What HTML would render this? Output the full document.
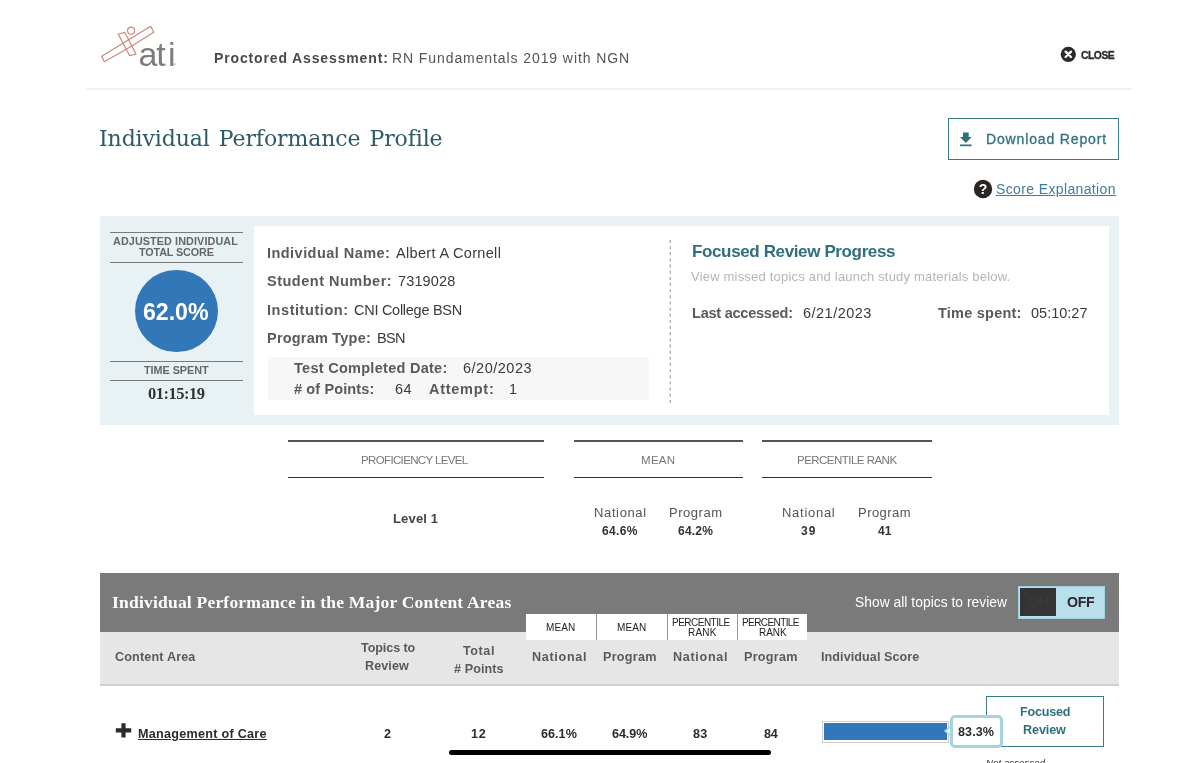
<!DOCTYPE html>
<html lang="en">
<head>
<meta charset="utf-8">
<title>Individual Performance Profile</title>
<style>
html,body{margin:0;padding:0;background:#fff;}
body{width:1200px;height:763px;position:relative;overflow:hidden;font-family:"Liberation Sans","DejaVu Sans",sans-serif;color:#4d4d4d;}
.a{position:absolute;white-space:nowrap;line-height:20px;}
.t{position:absolute;white-space:nowrap;line-height:20px;height:20px;will-change:transform;}
.os{font-family:"Liberation Sans","DejaVu Sans",sans-serif;}
.slab{font-family:"DejaVu Serif","Liberation Serif",serif;}
.lib{font-family:"Liberation Sans","DejaVu Sans",sans-serif;}
.lser{font-family:"Liberation Serif","DejaVu Serif",serif;}
.b{font-weight:bold;}
.i{font-style:italic;}

</style>
</head>
<body>

<!-- logo -->
<svg class="a" style="left:95px;top:18px;will-change:transform" width="90" height="55" viewBox="95 18 90 55">
  <g fill="none" stroke="#cb877c" stroke-width="1.2" stroke-linejoin="round">
    <path d="M101.7 56.3 L104.3 61.7 Q129 48.4 153.7 32.3 L150.7 26.3 Q126.5 41 101.7 56.3 Z"/>
    <path d="M118.3 34.3 L124.7 32.3 L136 54 L129.7 55.7 Z"/>
    <circle cx="131.1" cy="30.7" r="3.5"/>
  </g>
  <text y="66" font-family="Liberation Sans, sans-serif" font-size="34" fill="#807c7a" x="138.4 156.2 167.9">ati</text>
  <text x="173.2" y="66" font-family="Liberation Sans, sans-serif" font-size="3.5" fill="#6b6765">®</text>
</svg>

<!-- close icon -->
<svg class="a" style="left:1060px;top:46px" width="17" height="17" viewBox="1060 46 17 17"><circle cx="1068.3" cy="54.3" r="7.6" fill="#2a2a2a"/><path d="M1065.6 51.6 l5.4 5.4 m0 -5.4 l-5.4 5.4" stroke="#fff" stroke-width="2.3" stroke-linecap="round"/></svg>

<div class="a" style="left:86px;top:88px;width:1046px;height:2px;background:#f0f0f0"></div>

<!-- download button -->
<div class="a" style="left:948px;top:118px;width:171px;height:41.5px;border:1px solid #3b7a8a;background:#fff;box-sizing:border-box"></div>
<svg class="a" style="left:958px;top:130px" width="16" height="18" viewBox="958 130 16 18"><path d="M963 132.5 h5.7 v4.5 h3 l-5.85 6 l-5.85 -6 h3 z" fill="#2f6f7e"/><rect x="960" y="144.5" width="11.7" height="1.7" fill="#2f6f7e"/></svg>

<!-- help icon -->
<svg class="a" style="left:972px;top:178px;will-change:transform" width="22" height="22" viewBox="972 178 22 22"><circle cx="983" cy="189" r="9.2" fill="#2a2624"/><text x="983" y="194" text-anchor="middle" font-family="Liberation Sans, sans-serif" font-weight="bold" font-size="14" fill="#fff">?</text></svg>

<!-- profile panel -->
<div class="a" style="left:100px;top:216px;width:1018.5px;height:209px;background:#e8f2f5"></div>
<div class="a" style="left:254px;top:226px;width:855px;height:189px;background:#fff"></div>
<div class="a" style="left:110px;top:232px;width:133px;height:1px;background:#7a7a7a"></div>
<div class="a" style="left:110px;top:261.5px;width:133px;height:1px;background:#7a7a7a"></div>
<div class="a" style="left:135.3px;top:269.6px;width:82.6px;height:82.4px;border-radius:50%;background:#3277b8"></div>
<div class="a" style="left:110px;top:361px;width:133px;height:1px;background:#7a7a7a"></div>
<div class="a" style="left:110px;top:380px;width:133px;height:1px;background:#7a7a7a"></div>
<div class="a" style="left:267.5px;top:356.6px;width:381.7px;height:43.8px;background:#f7f7f7"></div>
<svg class="a" style="left:669px;top:239px" width="3" height="164" viewBox="0 0 3 164"><line x1="1.3" y1="1" x2="1.3" y2="164" stroke="#aaa" stroke-width="1.3" stroke-dasharray="3 3.15"/></svg>

<!-- stats rules -->
<div class="a" style="left:288px;top:440px;width:255.5px;height:1.5px;background:#555"></div>
<div class="a" style="left:288px;top:476.6px;width:255.5px;height:1.2px;background:#333"></div>
<div class="a" style="left:574px;top:440px;width:168.5px;height:1.5px;background:#555"></div>
<div class="a" style="left:574px;top:476.6px;width:168.5px;height:1.2px;background:#333"></div>
<div class="a" style="left:762px;top:440px;width:169.5px;height:1.5px;background:#555"></div>
<div class="a" style="left:762px;top:476.6px;width:169.5px;height:1.2px;background:#333"></div>

<!-- table header -->
<div class="a" style="left:100px;top:573px;width:1018.5px;height:59px;background:#7a7a7a"></div>
<div class="a" style="left:100px;top:632px;width:1018.5px;height:51.5px;background:#e6e6e6"></div>
<div class="a" style="left:100px;top:683.5px;width:1018.5px;height:2.5px;background:#d6ccce"></div>
<div class="a" style="left:1018px;top:586px;width:86.7px;height:33px;background:#b9dfea;box-sizing:border-box;border:1px solid #9fd3e3"></div>
<div class="a" style="left:1020.3px;top:588.2px;width:36px;height:27.8px;background:#343434"></div>
<div class="a" style="left:525.5px;top:614.3px;width:281.5px;height:25.7px;background:#999"></div>
<div class="a" style="left:525.5px;top:614.3px;width:70px;height:25.7px;background:#fff"></div>
<div class="a" style="left:596.6px;top:614.3px;width:70px;height:25.7px;background:#fff"></div>
<div class="a" style="left:667.6px;top:614.3px;width:69.5px;height:25.7px;background:#fff"></div>
<div class="a" style="left:738.1px;top:614.3px;width:68.9px;height:25.7px;background:#fff"></div>

<!-- row -->
<svg class="a" style="left:115px;top:722px" width="18" height="18" viewBox="115 722 18 18"><path d="M121.40 723.30 h4.2 v5.00 h5.60 v4.2 h-5.60 v5.00 h-4.2 v-5.00 h-5.60 v-4.2 h5.60 z" fill="#2a2a2a"/></svg>

<div class="a" style="left:986px;top:696px;width:117.5px;height:50.5px;border:1px solid #3b7a8a;background:#fff;box-sizing:border-box"></div>
<div class="a" style="left:822.3px;top:720.5px;width:127px;height:22px;border:1px solid #cfcfcf;background:#fff;box-sizing:border-box"></div>
<div class="a" style="left:824.3px;top:722.5px;width:122.3px;height:17.8px;background:#3277b8"></div>
<svg class="a" style="left:944px;top:726px" width="8" height="10" viewBox="0 0 8 10"><path d="M7 0.5 L1 5 L7 9.5" fill="#fff" stroke="#a6d3df" stroke-width="1.5"/></svg>
<div class="a" style="left:950px;top:714.8px;width:53.3px;height:33.5px;border:3px solid #a6d3df;border-radius:5px;background:#fff;box-sizing:border-box"></div>

<div class="a" style="left:448.7px;top:749.6px;width:322px;height:5px;border-radius:2.5px;background:#000"></div>

<div class="t os b" style="left:214px;top:48px;font-size:14px;color:#4a4a4a;letter-spacing:0.86px;">Proctored Assessment:</div>
<div class="t os" style="left:392px;top:48px;font-size:14px;color:#555;letter-spacing:0.91px;">RN Fundamentals 2019 with NGN</div>
<div class="t os b" style="left:1081px;top:45.5px;font-size:10.4px;color:#2a2a2a;letter-spacing:-0.51px;-webkit-text-stroke:0.3px #2a2a2a">CLOSE</div>
<div class="t slab" style="left:99px;top:129px;font-size:22px;color:#2e5a66;letter-spacing:-0.11px;word-spacing:2.2px">Individual Performance Profile</div>
<div class="t os" style="left:986px;top:128.5px;font-size:14px;color:#2f6f7e;letter-spacing:0.85px;-webkit-text-stroke:0.3px #2f6f7e">Download Report</div>
<div class="t os" style="left:996px;top:178.5px;font-size:14px;color:#3f7d9c;letter-spacing:0.37px;text-decoration:underline;text-underline-offset:1px">Score Explanation</div>
<div class="t os b" style="left:113px;top:231px;font-size:10.8px;color:#666;letter-spacing:0.1px;">ADJUSTED INDIVIDUAL</div>
<div class="t os b" style="left:139px;top:242px;font-size:10.8px;color:#666;letter-spacing:-0.13px;">TOTAL SCORE</div>
<div class="t lib b" style="left:143px;top:301.5px;font-size:23.2px;color:#fff;letter-spacing:-0.05px;">62.0%</div>
<div class="t os b" style="left:144px;top:360px;font-size:10.8px;color:#666;letter-spacing:-0.03px;">TIME SPENT</div>
<div class="t lser b" style="left:148px;top:383.5px;font-size:16.5px;color:#333;letter-spacing:-0.51px;">01:15:19</div>
<div class="t os b" style="left:267px;top:242.5px;font-size:14.5px;color:#5a5a5a;letter-spacing:0.46px;">Individual Name:</div>
<div class="t os" style="left:396px;top:242.5px;font-size:14.5px;color:#3a3a3a;letter-spacing:0.33px;">Albert A Cornell</div>
<div class="t os b" style="left:267px;top:271px;font-size:14.5px;color:#5a5a5a;letter-spacing:0.5px;">Student Number:</div>
<div class="t os" style="left:398px;top:271px;font-size:14.5px;color:#3a3a3a;letter-spacing:0.14px;">7319028</div>
<div class="t os b" style="left:267px;top:299.5px;font-size:14.5px;color:#5a5a5a;letter-spacing:0.56px;">Institution:</div>
<div class="t os" style="left:354px;top:299.5px;font-size:14.5px;color:#3a3a3a;letter-spacing:-0.27px;">CNI College BSN</div>
<div class="t os b" style="left:267px;top:328px;font-size:14.5px;color:#5a5a5a;letter-spacing:0.21px;">Program Type:</div>
<div class="t os" style="left:377px;top:328px;font-size:14.5px;color:#3a3a3a;letter-spacing:-0.68px;">BSN</div>
<div class="t os b" style="left:294px;top:357.5px;font-size:14.5px;color:#5a5a5a;letter-spacing:0.28px;">Test Completed Date:</div>
<div class="t os" style="left:463px;top:357.5px;font-size:14.5px;color:#3a3a3a;letter-spacing:0.51px;">6/20/2023</div>
<div class="t os b" style="left:294px;top:379px;font-size:14.5px;color:#5a5a5a;letter-spacing:0.12px;"># of Points:</div>
<div class="t os" style="left:395px;top:379px;font-size:14.5px;color:#3a3a3a;letter-spacing:0.43px;">64</div>
<div class="t os b" style="left:429px;top:379px;font-size:14.5px;color:#5a5a5a;letter-spacing:0.73px;">Attempt:</div>
<div class="t os" style="left:509px;top:379px;font-size:14.5px;color:#3a3a3a;">1</div>
<div class="t os b" style="left:692px;top:242px;font-size:17px;color:#2f6f7e;letter-spacing:-0.37px;">Focused Review Progress</div>
<div class="t os" style="left:691px;top:267px;font-size:13px;color:#b5b5b5;letter-spacing:0.2px;">View missed topics and launch study materials below.</div>
<div class="t os b" style="left:692px;top:302.5px;font-size:14.5px;color:#5a5a5a;letter-spacing:-0.23px;">Last accessed:</div>
<div class="t os" style="left:803px;top:302.5px;font-size:14.5px;color:#3a3a3a;letter-spacing:0.48px;">6/21/2023</div>
<div class="t os b" style="left:938px;top:302.5px;font-size:14.5px;color:#5a5a5a;letter-spacing:0.23px;">Time spent:</div>
<div class="t os" style="left:1031px;top:302.5px;font-size:14.5px;color:#3a3a3a;">05:10:27</div>
<div class="t os" style="left:361px;top:450px;font-size:11.5px;color:#777;letter-spacing:-0.64px;">PROFICIENCY LEVEL</div>
<div class="t os b" style="left:393px;top:509px;font-size:13px;color:#444;letter-spacing:0.17px;">Level 1</div>
<div class="t os" style="left:641px;top:450px;font-size:11.5px;color:#777;letter-spacing:0.3px;">MEAN</div>
<div class="t os" style="left:594px;top:502.5px;font-size:13px;color:#555;letter-spacing:0.63px;">National</div>
<div class="t os b" style="left:602px;top:521px;font-size:12px;color:#333;letter-spacing:0.35px;">64.6%</div>
<div class="t os" style="left:669px;top:502.5px;font-size:13px;color:#555;letter-spacing:0.53px;">Program</div>
<div class="t os b" style="left:678px;top:521px;font-size:12px;color:#333;letter-spacing:0.23px;">64.2%</div>
<div class="t os" style="left:797px;top:450px;font-size:11.5px;color:#777;letter-spacing:-0.52px;">PERCENTILE RANK</div>
<div class="t os" style="left:782px;top:502.5px;font-size:13px;color:#555;letter-spacing:0.72px;">National</div>
<div class="t os b" style="left:801px;top:521px;font-size:12px;color:#333;letter-spacing:1.07px;">39</div>
<div class="t os" style="left:858px;top:502.5px;font-size:13px;color:#555;letter-spacing:0.46px;">Program</div>
<div class="t os b" style="left:878px;top:521px;font-size:12px;color:#333;">41</div>
<div class="t lser b" style="left:112px;top:591.5px;font-size:17.5px;color:#fff;letter-spacing:0.21px;">Individual Performance in the Major Content Areas</div>
<div class="t os" style="left:855px;top:592.5px;font-size:13.8px;color:#fff;letter-spacing:0.04px;">Show all topics to review</div>
<div class="t os b" style="left:1028px;top:592px;font-size:14.2px;color:#3a3a3a;letter-spacing:-0.66px;">ON</div>
<div class="t os b" style="left:1067px;top:592px;font-size:14.2px;color:#2a2a2a;letter-spacing:-0.41px;">OFF</div>
<div class="t os" style="left:546px;top:617.5px;font-size:10px;color:#222;letter-spacing:0.07px;">MEAN</div>
<div class="t os" style="left:617px;top:617.5px;font-size:10px;color:#222;letter-spacing:0.07px;">MEAN</div>
<div class="t os" style="left:672px;top:613px;font-size:10px;color:#222;letter-spacing:-0.51px;">PERCENTILE</div>
<div class="t os" style="left:688px;top:623px;font-size:10px;color:#222;letter-spacing:0.2px;">RANK</div>
<div class="t os" style="left:742px;top:613px;font-size:10px;color:#222;letter-spacing:-0.59px;">PERCENTILE</div>
<div class="t os" style="left:759px;top:623px;font-size:10px;color:#222;letter-spacing:-0.05px;">RANK</div>
<div class="t os b" style="left:115px;top:647px;font-size:12.6px;color:#5a5a5a;letter-spacing:0.16px;">Content Area</div>
<div class="t os b" style="left:361px;top:638px;font-size:12.6px;color:#5a5a5a;letter-spacing:-0.1px;">Topics to</div>
<div class="t os b" style="left:365px;top:656px;font-size:12.6px;color:#5a5a5a;letter-spacing:0.07px;">Review</div>
<div class="t os b" style="left:463px;top:641px;font-size:12.6px;color:#5a5a5a;letter-spacing:0.56px;">Total</div>
<div class="t os b" style="left:454px;top:659px;font-size:12.6px;color:#5a5a5a;letter-spacing:0.09px;"># Points</div>
<div class="t os b" style="left:532px;top:647px;font-size:12.6px;color:#5a5a5a;letter-spacing:0.68px;">National</div>
<div class="t os b" style="left:603px;top:647px;font-size:12.6px;color:#5a5a5a;letter-spacing:0.27px;">Program</div>
<div class="t os b" style="left:673px;top:647px;font-size:12.6px;color:#5a5a5a;letter-spacing:0.68px;">National</div>
<div class="t os b" style="left:744px;top:647px;font-size:12.6px;color:#5a5a5a;letter-spacing:0.27px;">Program</div>
<div class="t os b" style="left:821px;top:647px;font-size:12.6px;color:#5a5a5a;letter-spacing:0.07px;">Individual Score</div>
<div class="t os b" style="left:138px;top:723.5px;font-size:12.6px;color:#2b2b2b;letter-spacing:0.27px;text-decoration:underline;text-underline-offset:1px">Management of Care</div>
<div class="t os b" style="left:384px;top:723.5px;font-size:12.6px;color:#2b2b2b;">2</div>
<div class="t os b" style="left:471px;top:723.5px;font-size:12.6px;color:#2b2b2b;letter-spacing:0.66px;">12</div>
<div class="t os b" style="left:541px;top:723.5px;font-size:12.6px;color:#2b2b2b;letter-spacing:0.03px;">66.1%</div>
<div class="t os b" style="left:612px;top:723.5px;font-size:12.6px;color:#2b2b2b;letter-spacing:-0.07px;">64.9%</div>
<div class="t os b" style="left:693px;top:723.5px;font-size:12.6px;color:#2b2b2b;letter-spacing:0.21px;">83</div>
<div class="t os b" style="left:764px;top:723.5px;font-size:12.6px;color:#2b2b2b;letter-spacing:-0.21px;">84</div>
<div class="t os b" style="left:958px;top:722px;font-size:12.6px;color:#2b2b2b;letter-spacing:0.09px;">83.3%</div>
<div class="t os b" style="left:1020px;top:702px;font-size:12.6px;color:#2f6f7e;letter-spacing:-0.23px;">Focused</div>
<div class="t os b" style="left:1023px;top:720px;font-size:12.6px;color:#2f6f7e;letter-spacing:-0.1px;">Review</div>
<div class="t os i" style="left:986px;top:752.5px;font-size:9.5px;color:#333;letter-spacing:0.13px;">Not accessed</div>

</body>
</html>
